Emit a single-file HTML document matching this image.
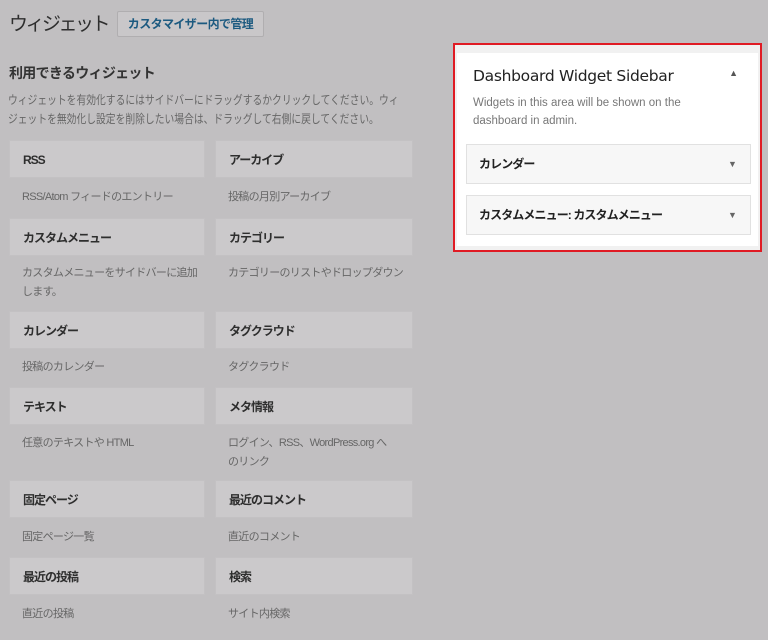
<!DOCTYPE html>
<html><head><meta charset="utf-8"><style>
body{margin:0;width:768px;height:640px;background:#c1bfc1;font-family:"Liberation Sans","Noto Sans CJK JP",sans-serif;position:relative;overflow:hidden;color:#333}
.a{position:absolute}
h1{position:absolute;left:9px;top:9px;margin:0;font-size:19px;letter-spacing:-2.5px;font-weight:normal;color:#2e2e2e}
.btn{position:absolute;left:117px;top:11px;width:145px;height:24px;border:1px solid #b0aeb0;background:#c9c7c9;color:#1c5a80;font-size:12px;letter-spacing:-0.6px;font-weight:bold;line-height:24px;text-align:center;border-radius:2px}
h2{position:absolute;left:9px;top:63px;margin:0;font-size:14px;letter-spacing:-0.7px;color:#333}
.intro{position:absolute;left:8px;top:91px;width:490px;font-size:12px;line-height:19px;color:#666;transform:scaleX(0.815);transform-origin:0 0}
.w{position:absolute;width:196px;height:38px;background:#cbc9cb;border:1px solid #c3c1c3;font-size:12px;letter-spacing:-1px;font-weight:bold;line-height:38px;box-sizing:border-box;padding-left:13px;color:#2e2e2e}
.d{position:absolute;font-size:11px;letter-spacing:-0.7px;color:#666;line-height:19px;width:195px}
.panel{position:absolute;left:453px;top:43px;width:309px;height:209px;border:2px solid #e01b24;box-sizing:border-box;background:#f1f1f1}
.inner{position:absolute;left:2px;top:8px;width:301px;height:193px;background:#fff}
.it{position:absolute;left:9px;width:285px;height:40px;background:#f7f7f7;border:1px solid #e1e1e1;box-sizing:border-box;font-size:12px;letter-spacing:-0.9px;font-weight:bold;line-height:38px;padding-left:12px;color:#222}
.tri{position:absolute;right:14px;top:0;font-size:9px;color:#666}
</style></head><body>
<h1>ウィジェット</h1>
<div class="btn">カスタマイザー内で管理</div>
<h2>利用できるウィジェット</h2>
<div class="intro">ウィジェットを有効化するにはサイドバーにドラッグするかクリックしてください。ウィ<br>ジェットを無効化し設定を削除したい場合は、ドラッグして右側に戻してください。</div>

<div class="w" style="left:9px;top:140px">RSS</div>
<div class="w" style="left:215px;top:140px;width:198px">アーカイブ</div>
<div class="d" style="left:22px;top:188px">RSS/Atom フィードのエントリー</div>
<div class="d" style="left:228px;top:188px">投稿の月別アーカイブ</div>

<div class="w" style="left:9px;top:218px">カスタムメニュー</div>
<div class="w" style="left:215px;top:218px;width:198px">カテゴリー</div>
<div class="d" style="left:22px;top:264px;width:180px">カスタムメニューをサイドバーに追加<br>します。</div>
<div class="d" style="left:228px;top:264px">カテゴリーのリストやドロップダウン</div>

<div class="w" style="left:9px;top:311px">カレンダー</div>
<div class="w" style="left:215px;top:311px;width:198px">タグクラウド</div>
<div class="d" style="left:22px;top:358px">投稿のカレンダー</div>
<div class="d" style="left:228px;top:358px">タグクラウド</div>

<div class="w" style="left:9px;top:387px">テキスト</div>
<div class="w" style="left:215px;top:387px;width:198px">メタ情報</div>
<div class="d" style="left:22px;top:434px">任意のテキストや HTML</div>
<div class="d" style="left:228px;top:434px;width:185px">ログイン、RSS、WordPress.org へ<br>のリンク</div>

<div class="w" style="left:9px;top:480px">固定ページ</div>
<div class="w" style="left:215px;top:480px;width:198px">最近のコメント</div>
<div class="d" style="left:22px;top:528px">固定ページ一覧</div>
<div class="d" style="left:228px;top:528px">直近のコメント</div>

<div class="w" style="left:9px;top:557px">最近の投稿</div>
<div class="w" style="left:215px;top:557px;width:198px">検索</div>
<div class="d" style="left:22px;top:605px">直近の投稿</div>
<div class="d" style="left:228px;top:605px">サイト内検索</div>

<div class="panel"><div class="inner">
<div class="a" style="left:16px;top:14px;font-size:15.5px;color:#222;font-family:'DejaVu Sans','Liberation Sans',sans-serif;letter-spacing:-0.3px">Dashboard Widget Sidebar</div>
<div class="a" style="right:20px;top:15px;font-size:9px;color:#555">▲</div>
<div class="a" style="left:16px;top:41px;width:260px;font-size:11.5px;line-height:18px;color:#777">Widgets in this area will be shown on the dashboard in admin.</div>
<div class="it" style="top:91px">カレンダー<span class="tri">▼</span></div>
<div class="it" style="top:142px">カスタムメニュー: カスタムメニュー<span class="tri">▼</span></div>
</div></div>
</body></html>
